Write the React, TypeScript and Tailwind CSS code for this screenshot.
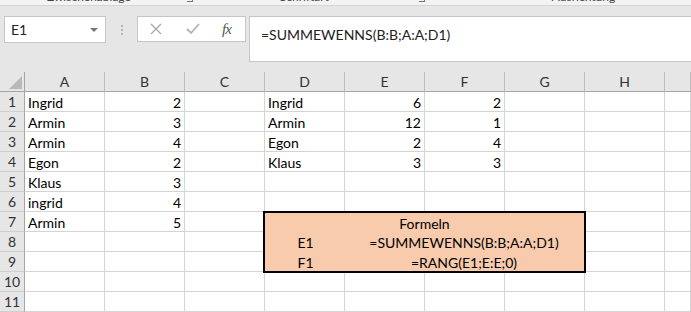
import React from "react";

const COLS = ["A", "B", "C", "D", "E", "F", "G", "H", ""];

type Cell = { t: string; num?: boolean };
const DATA: Record<number, Record<number, Cell>> = {
  1: { 0: { t: "Ingrid" }, 1: { t: "2", num: true }, 3: { t: "Ingrid" }, 4: { t: "6", num: true }, 5: { t: "2", num: true } },
  2: { 0: { t: "Armin" }, 1: { t: "3", num: true }, 3: { t: "Armin" }, 4: { t: "12", num: true }, 5: { t: "1", num: true } },
  3: { 0: { t: "Armin" }, 1: { t: "4", num: true }, 3: { t: "Egon" }, 4: { t: "2", num: true }, 5: { t: "4", num: true } },
  4: { 0: { t: "Egon" }, 1: { t: "2", num: true }, 3: { t: "Klaus" }, 4: { t: "3", num: true }, 5: { t: "3", num: true } },
  5: { 0: { t: "Klaus" }, 1: { t: "3", num: true } },
  6: { 0: { t: "ingrid" }, 1: { t: "4", num: true } },
  7: { 0: { t: "Armin" }, 1: { t: "5", num: true } },
};

function inBox(r: number, c: number) {
  return r >= 7 && r <= 9 && c >= 3 && c <= 6;
}

export default function App() {
  const rows = Array.from({ length: 11 }, (_, i) => i + 1);
  return (
    <div className="w-[691px] h-[312px] overflow-hidden bg-white font-['Lato',sans-serif] text-black">
      {/* ribbon bottom strip (clipped labels) */}
      <div className="h-[5px] bg-[#f3f3f3] overflow-hidden relative text-[12px] leading-[12px] text-[#444]">
        <div className="flex items-start -mt-[9px]">
          <span className="ml-[47px]">Zwischenablage</span>
          <span className="ml-[56px] mt-[5px] w-[6px] h-[6px] border-r border-b border-[#777]"></span>
          <span className="ml-[87px]">Schriftart</span>
          <span className="ml-[90px] mt-[5px] w-[6px] h-[6px] border-r border-b border-[#777]"></span>
          <span className="ml-[127px]">Ausrichtung</span>
        </div>
      </div>
      <div className="h-px bg-[#d5d5d5]" />
      {/* formula bar area */}
      <div className="h-[66px] bg-[#e6e6e6] flex items-start pt-[10px]">
        <div className="ml-[4px] w-[102px] h-[27px] bg-white border border-[#c6c6c6] flex items-center justify-between pl-[6px] pr-[7px]">
          <span className="text-[14px] leading-none text-[#222]">E1</span>
          <span className="w-0 h-0 border-l-[4px] border-r-[4px] border-t-[4px] border-l-transparent border-r-transparent border-t-[#777]" />
        </div>
        <div className="ml-[15px] mt-[9px] flex flex-col gap-[2px]">
          <span className="w-[2px] h-[2px] bg-[#b4b4b4]" />
          <span className="w-[2px] h-[2px] bg-[#b4b4b4]" />
          <span className="w-[2px] h-[2px] bg-[#b4b4b4]" />
        </div>
        <div className="ml-[14px] w-[109px] h-[26px] bg-white border border-[#c6c6c6] flex items-center">
          <svg className="ml-[12px]" width="12" height="12" viewBox="0 0 12 12">
            <path d="M1 1 L11 11 M11 1 L1 11" stroke="#a8a8a8" strokeWidth="1.3" fill="none" />
          </svg>
          <svg className="ml-[24px]" width="14" height="12" viewBox="0 0 14 12">
            <path d="M1 6 L5 10 L13 1" stroke="#b4b4b4" strokeWidth="1.8" fill="none" />
          </svg>
          <span className="ml-[22px] font-['Liberation_Serif',serif] italic text-[15px] leading-none text-[#555] tracking-[-1px]">fx</span>
        </div>
        <div className="ml-[3px] flex-1 h-[46px] bg-white border-l border-t border-b border-[#c6c6c6] pl-[11px] pt-[5px]">
          <span className="text-[14px] leading-[19px] text-[#222]">=SUMMEWENNS(B:B;A:A;D1)</span>
        </div>
      </div>
      {/* sheet */}
      <div className="grid grid-cols-[25px_repeat(8,80px)_1fr] auto-rows-[20px]">
        {/* header row */}
        <div className="bg-[#e6e6e6] border-r border-b border-[#a5a5a5] relative">
          <svg className="absolute left-[9px] top-[4px]" width="13" height="13" viewBox="0 0 13 13">
            <path d="M13 0 L13 13 L0 13 Z" fill="#b9b9b9" />
          </svg>
        </div>
        {COLS.map((c, i) => (
          <div
            key={"h" + i}
            className="bg-[#e6e6e6] border-r border-r-[#bdbdbd] border-b border-b-[#a5a5a5] flex items-center justify-center text-[14px] leading-none text-[#333]"
          >
            {c}
          </div>
        ))}
        {/* formula box spanning D7:G9 */}
        <div className="col-start-5 col-span-4 row-start-8 row-span-3 -ml-[2px] -mr-px -mt-px -mb-px z-10 border-2 border-black bg-[#f8cbad] grid grid-cols-[79px_1fr] grid-rows-[20px_20px_20px] text-[14px] leading-[19px]">
          <div className="col-span-2 text-center pt-[1px]">Formeln</div>
          <div className="text-center pl-[2px]">E1</div>
          <div className="text-center">=SUMMEWENNS(B:B;A:A;D1)</div>
          <div className="text-center pl-[2px]">F1</div>
          <div className="text-center">=RANG(E1;E:E;0)</div>
        </div>
        {rows.map((r) => (
          <React.Fragment key={r}>
            <div className="bg-[#e6e6e6] border-r border-r-[#a5a5a5] border-b border-b-[#cfcfcf] flex items-center justify-center text-[14px] leading-none text-[#333]">
              {r}
            </div>
            {COLS.map((_, c) => {
              if (inBox(r, c)) return null;
              const cell = DATA[r]?.[c];
              return (
                <div
                  key={c}
                  className={
                    "border-r border-b border-[#d4d4d4] px-[3px] pt-[1px] text-[14px] leading-[19px] whitespace-nowrap overflow-visible " +
                    (cell?.num ? "text-right" : "text-left")
                  }
                >
                  {cell?.t ?? ""}
                </div>
              );
            })}
          </React.Fragment>
        ))}
      </div>
    </div>
  );
}
